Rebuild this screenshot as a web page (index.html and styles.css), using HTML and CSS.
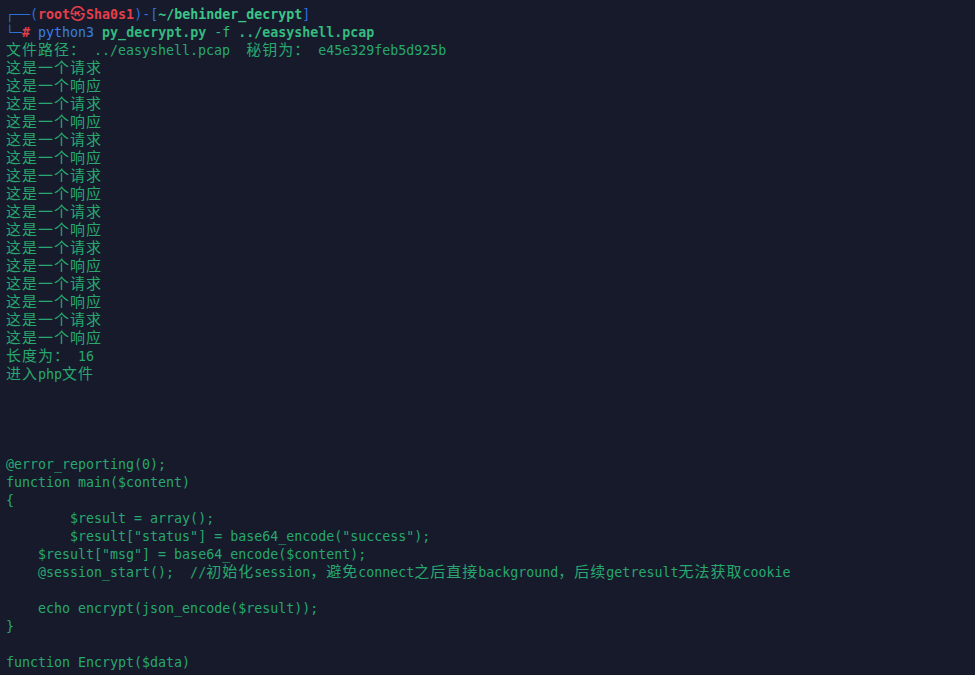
FILE: index.html
```html
<!DOCTYPE html>
<html lang="zh">
<head>
<meta charset="utf-8">
<title>terminal</title>
<link rel="stylesheet" href="styles.css">
</head>
<body>
<div class="term">
<div class="ln"><span class="pb">┌──(</span><span class="pr">root<span class="zh">㉿</span>Sha0s1</span><span class="pb">)-[</span><span class="path">~/behinder_decrypt</span><span class="pb">]</span></div>
<div class="ln"><span class="pb">└─</span><span class="hash">#</span> <span class="cmd">python3</span> <span class="arg">py_decrypt.py</span> <span class="opt">-f</span> <span class="arg">../easyshell.pcap</span></div>
<div class="ln"><span class="zh">文件路径：</span> ../easyshell.pcap  <span class="zh">秘钥为：</span> e45e329feb5d925b</div>
<div class="ln"><span class="zh">这是一个请求</span></div>
<div class="ln"><span class="zh">这是一个响应</span></div>
<div class="ln"><span class="zh">这是一个请求</span></div>
<div class="ln"><span class="zh">这是一个响应</span></div>
<div class="ln"><span class="zh">这是一个请求</span></div>
<div class="ln"><span class="zh">这是一个响应</span></div>
<div class="ln"><span class="zh">这是一个请求</span></div>
<div class="ln"><span class="zh">这是一个响应</span></div>
<div class="ln"><span class="zh">这是一个请求</span></div>
<div class="ln"><span class="zh">这是一个响应</span></div>
<div class="ln"><span class="zh">这是一个请求</span></div>
<div class="ln"><span class="zh">这是一个响应</span></div>
<div class="ln"><span class="zh">这是一个请求</span></div>
<div class="ln"><span class="zh">这是一个响应</span></div>
<div class="ln"><span class="zh">这是一个请求</span></div>
<div class="ln"><span class="zh">这是一个响应</span></div>
<div class="ln"><span class="zh">长度为：</span> 16</div>
<div class="ln"><span class="zh">进入</span>php<span class="zh">文件</span></div>
<div class="ln"></div>
<div class="ln"></div>
<div class="ln"></div>
<div class="ln"></div>
<div class="ln">@error_reporting(0);</div>
<div class="ln">function main($content)</div>
<div class="ln">{</div>
<div class="ln">        $result = array();</div>
<div class="ln">        $result["status"] = base64_encode("success");</div>
<div class="ln">    $result["msg"] = base64_encode($content);</div>
<div class="ln">    @session_start();  //<span class="zh">初始化</span>session<span class="zh">，避免</span>connect<span class="zh">之后直接</span>background<span class="zh">，后续</span>getresult<span class="zh">无法获取</span>cookie</div>
<div class="ln"></div>
<div class="ln">    echo encrypt(json_encode($result));</div>
<div class="ln">}</div>
<div class="ln"></div>
<div class="ln">function Encrypt($data)</div>
</div>
</body>
</html>
```

FILE: styles.css
```css
html, body {
  margin: 0;
  padding: 0;
  background: #161a2b;
}

.term {
  padding: 6px 0 0 6px;
  font-family: "DejaVu Sans Mono", "Noto Sans CJK SC", monospace;
  font-size: 13.3px;
  color: #28a86e;
  height: 669px;
  overflow: hidden;
}

.ln {
  height: 18px;
  line-height: 18px;
  white-space: pre;
}

.zh {
  line-height: 0;
  font-family: "Noto Sans CJK SC", sans-serif;
  font-size: 15px;
  letter-spacing: 1px;
}

.pb {
  color: #2f6fd8;
}

.pr {
  color: #e23f4a;
  font-weight: bold;
}

.path {
  color: #3cc489;
  font-weight: bold;
}

.hash {
  color: #e23f4a;
  font-weight: bold;
}

.cmd {
  color: #3a80e4;
}

.arg {
  color: #35bb7f;
  font-weight: bold;
}

.opt {
  color: #35bb7f;
}
```
